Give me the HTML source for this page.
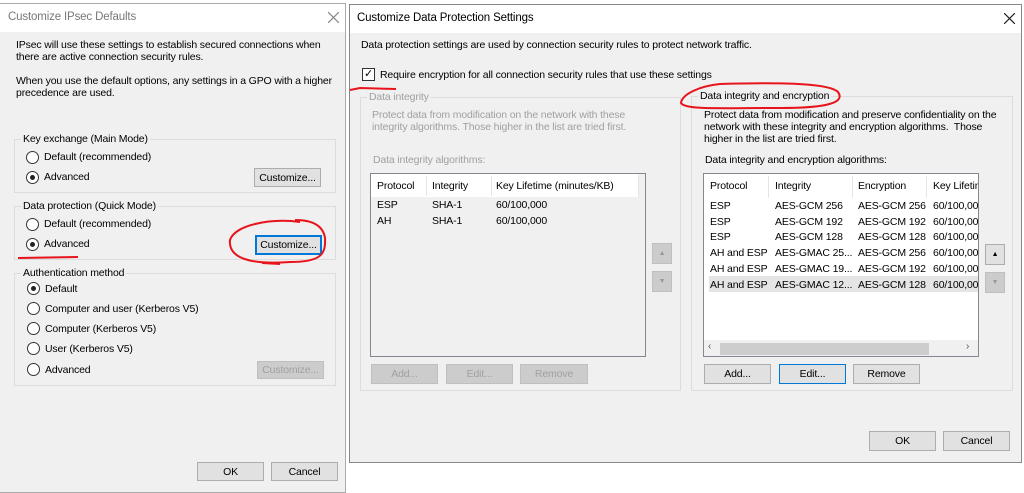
<!DOCTYPE html>
<html><head><style>
*{box-sizing:border-box;margin:0;padding:0}
body{width:1024px;height:485px;background:#fff;position:relative;overflow:hidden;font-family:"Liberation Sans",sans-serif;font-size:10.5px;letter-spacing:-0.15px;color:#000}
.a{position:absolute;white-space:nowrap}
.dlg{position:absolute;background:#f0f0f0;border:1px solid #888}
.tb{position:absolute;left:0;right:0;top:0;background:#fff}
.grp{position:absolute;border:1px solid #dcdcdc}
.gl{position:absolute;background:#f0f0f0;padding:0 2px;top:-7px;left:6px}
.btn{position:absolute;background:#e1e1e1;border:1px solid #adadad;text-align:center;line-height:18px}
.dis{color:#a0a0a0;background:#ccc;border-color:#bfbfbf}
.rad{position:absolute;width:13px;height:13px;border:1px solid #333;border-radius:50%;background:#fff}
.rad.on::after{content:"";position:absolute;left:3px;top:3px;width:5px;height:5px;border-radius:50%;background:#222}
.g{color:#a0a0a0}
</style></head><body>
<!-- left dialog -->
<div class="dlg" style="left:-1px;top:3px;width:347px;height:490px;border-color:#aaa">
 <div class="tb" style="height:28px"></div>
</div>
<div class="a" style="left:8px;top:11px;font-size:11.5px;color:#777">Customize IPsec Defaults</div>
<svg class="a" style="left:328px;top:12px" width="11" height="11"><path d="M0 0L11 11M11 0L0 11" stroke="#888" stroke-width="1.2"/></svg>
<div class="a" style="left:16px;top:39px;line-height:12px">IPsec will use these settings to establish secured connections when<br>there are active connection security rules.</div>
<div class="a" style="left:16px;top:75px;line-height:12px">When you use the default options, any settings in a GPO with a higher<br>precedence are used.</div>

<div class="grp" style="left:14px;top:139px;width:322px;height:54px"><span class="gl a">Key exchange (Main Mode)</span></div>
<div class="rad" style="left:26px;top:151px"></div><div class="a" style="left:44px;top:151px">Default (recommended)</div>
<div class="rad on" style="left:26px;top:171px"></div><div class="a" style="left:44px;top:171px">Advanced</div>
<div class="btn" style="left:254px;top:168px;width:67px;height:19px">Customize...</div>

<div class="grp" style="left:14px;top:206px;width:322px;height:54px"><span class="gl a">Data protection (Quick Mode)</span></div>
<div class="rad" style="left:26px;top:218px"></div><div class="a" style="left:44px;top:218px">Default (recommended)</div>
<div class="rad on" style="left:26px;top:238px"></div><div class="a" style="left:44px;top:238px">Advanced</div>
<div class="btn" style="left:255px;top:235px;width:67px;height:20px;border:2px solid #0078d7;line-height:16px">Customize...</div>

<div class="grp" style="left:14px;top:273px;width:322px;height:113px"><span class="gl a">Authentication method</span></div>
<div class="rad on" style="left:27px;top:282px"></div><div class="a" style="left:45px;top:283px">Default</div>
<div class="rad" style="left:27px;top:302px"></div><div class="a" style="left:45px;top:303px">Computer and user (Kerberos V5)</div>
<div class="rad" style="left:27px;top:322px"></div><div class="a" style="left:45px;top:323px">Computer (Kerberos V5)</div>
<div class="rad" style="left:27px;top:342px"></div><div class="a" style="left:45px;top:343px">User (Kerberos V5)</div>
<div class="rad" style="left:27px;top:363px"></div><div class="a" style="left:45px;top:364px">Advanced</div>
<div class="btn dis" style="left:257px;top:361px;width:67px;height:18px;line-height:16px">Customize...</div>
<div class="btn" style="left:197px;top:462px;width:67px;height:19px">OK</div>
<div class="btn" style="left:271px;top:462px;width:67px;height:19px">Cancel</div>

<!-- right dialog -->
<div class="dlg" style="left:349px;top:4px;width:673px;height:459px;border-color:#888">
 <div class="tb" style="height:28px"></div>
</div>
<div class="a" style="left:357px;top:12px;font-size:11.5px">Customize Data Protection Settings</div>
<svg class="a" style="left:1004px;top:13px" width="11" height="11"><path d="M0 0L11 11M11 0L0 11" stroke="#222" stroke-width="1.2"/></svg>
<div class="a" style="left:361px;top:39px">Data protection settings are used by connection security rules to protect network traffic.</div>
<div class="a" style="left:362px;top:68px;width:13px;height:13px;border:1px solid #333;background:#fff;font-size:11px;line-height:11px;text-align:center">✓</div>
<div class="a" style="left:380px;top:69px">Require encryption for all connection security rules that use these settings</div>

<div class="grp" style="left:360px;top:97px;width:321px;height:294px"><span class="gl a g">Data integrity</span></div>
<div class="a g" style="left:372px;top:109px;line-height:12px">Protect data from modification on the network with these<br>integrity algorithms. Those higher in the list are tried first.</div>
<div class="a g" style="left:373px;top:154px">Data integrity algorithms:</div>
<div class="a" style="left:370px;top:173px;width:276px;height:184px;border:1px solid #828790;background:#f0f0f0">
 <div style="position:absolute;left:0;top:0;width:267px;height:23px;background:#fff"></div>
 <div style="position:absolute;left:55px;top:2px;width:1px;height:20px;background:#e5e5e5"></div>
 <div style="position:absolute;left:120px;top:2px;width:1px;height:20px;background:#e5e5e5"></div>
 <div style="position:absolute;left:267px;top:2px;width:1px;height:20px;background:#e5e5e5"></div>
</div>
<div class="a" style="left:377px;top:180px">Protocol</div><div class="a" style="left:432px;top:180px">Integrity</div><div class="a" style="left:496px;top:180px">Key Lifetime (minutes/KB)</div>
<div class="a" style="left:377px;top:199px">ESP</div><div class="a" style="left:432px;top:199px">SHA-1</div><div class="a" style="left:496px;top:199px">60/100,000</div>
<div class="a" style="left:377px;top:215px">AH</div><div class="a" style="left:432px;top:215px">SHA-1</div><div class="a" style="left:496px;top:215px">60/100,000</div>
<div class="btn dis" style="left:652px;top:243px;width:20px;height:21px;font-size:7px;line-height:19px;color:#999">▲</div>
<div class="btn dis" style="left:652px;top:271px;width:20px;height:21px;font-size:7px;line-height:19px;color:#999">▼</div>
<div class="btn dis" style="left:371px;top:364px;width:67px;height:20px">Add...</div>
<div class="btn dis" style="left:446px;top:364px;width:67px;height:20px">Edit...</div>
<div class="btn dis" style="left:520px;top:364px;width:68px;height:20px">Remove</div>

<div class="grp" style="left:691px;top:96px;width:322px;height:295px"><span class="gl a">Data integrity and encryption</span></div>
<div class="a" style="left:704px;top:109px;line-height:12px">Protect data from modification and preserve confidentiality on the<br>network with these integrity and encryption algorithms.&nbsp; Those<br>higher in the list are tried first.</div>
<div class="a" style="left:705px;top:154px">Data integrity and encryption algorithms:</div>
<div class="a" style="left:703px;top:173px;width:276px;height:184px;border:1px solid #828790;background:#fff;overflow:hidden">
 <div style="position:absolute;left:5px;top:102px;width:270px;height:16px;background:#e5e5e5"></div>
 <div style="position:absolute;left:64px;top:2px;width:1px;height:22px;background:#e5e5e5"></div>
 <div style="position:absolute;left:148px;top:2px;width:1px;height:22px;background:#e5e5e5"></div>
 <div style="position:absolute;left:222px;top:2px;width:1px;height:22px;background:#e5e5e5"></div>
 <div style="position:absolute;left:0;top:166px;width:275px;height:17px;background:#f0f0f0"></div>
 <div style="position:absolute;left:16px;top:169px;width:209px;height:12px;background:#cdcdcd"></div>
 <div style="position:absolute;left:4px;top:167px;font-size:10px;color:#555">‹</div>
 <div style="position:absolute;left:262px;top:167px;font-size:10px;color:#555">›</div>
</div>
<div class="a" style="left:710px;top:180px">Protocol</div><div class="a" style="left:775px;top:180px">Integrity</div><div class="a" style="left:858px;top:180px">Encryption</div><div class="a" style="left:933px;top:180px;width:45px;overflow:hidden">Key Lifetime</div>
<div class="a" style="left:710px;top:199px;line-height:15.7px">ESP<br>ESP<br>ESP<br>AH and ESP<br>AH and ESP<br>AH and ESP</div>
<div class="a" style="left:775px;top:199px;line-height:15.7px">AES-GCM 256<br>AES-GCM 192<br>AES-GCM 128<br>AES-GMAC 25...<br>AES-GMAC 19...<br>AES-GMAC 12...</div>
<div class="a" style="left:858px;top:199px;line-height:15.7px">AES-GCM 256<br>AES-GCM 192<br>AES-GCM 128<br>AES-GCM 256<br>AES-GCM 192<br>AES-GCM 128</div>
<div class="a" style="left:933px;top:199px;line-height:15.7px;width:45px;overflow:hidden">60/100,000<br>60/100,000<br>60/100,000<br>60/100,000<br>60/100,000<br>60/100,000</div>
<div class="btn" style="left:985px;top:244px;width:20px;height:21px;font-size:7px;line-height:19px">▲</div>
<div class="btn dis" style="left:985px;top:272px;width:20px;height:21px;font-size:7px;line-height:19px;color:#999">▼</div>
<div class="btn" style="left:704px;top:364px;width:67px;height:20px">Add...</div>
<div class="btn" style="left:779px;top:364px;width:67px;height:20px;border:1px solid #0078d7">Edit...</div>
<div class="btn" style="left:853px;top:364px;width:67px;height:20px">Remove</div>
<div class="btn" style="left:869px;top:431px;width:67px;height:20px">OK</div>
<div class="btn" style="left:943px;top:431px;width:67px;height:20px">Cancel</div>

<svg class="a" style="left:0;top:0" width="1024" height="485">
<g fill="none" stroke="#e8141c" stroke-width="2">
<path d="M300 222 C270 218 235 225 230 240 C228 258 250 265 290 262 C320 262 326 255 325 238 C323 225 312 220 295 220"/>
<path d="M262 263 L280 264"/>
<path d="M18 258 L78 257"/>
<path d="M350 90 L360 88 L396 89"/>
<path d="M720 84 C700 86 682 94 681 103 C685 110 720 108 780 108 C830 108 845 102 838 92 C830 84 790 82 720 84"/>
</g></svg>
</body></html>
